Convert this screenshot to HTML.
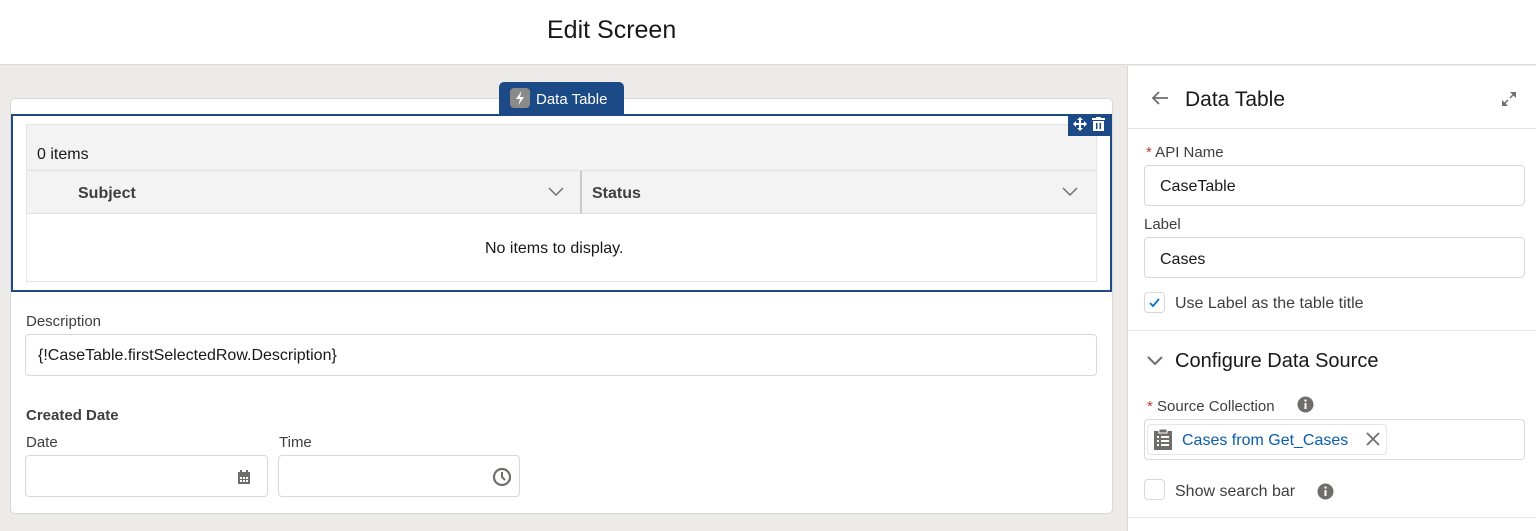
<!DOCTYPE html>
<html><head><style>
*{box-sizing:border-box;margin:0;padding:0}
body{width:1536px;height:531px;overflow:hidden;background:#ecebea;font-family:"Liberation Sans",sans-serif;color:#181818;position:relative}
.abs{position:absolute}
.t{position:absolute;padding-top:2px}
.inp{position:absolute;background:#fff;border:1px solid #d8d8d8;border-radius:4px}
.lbl{position:absolute;font-size:15px;color:#3e3e3c;padding-top:1px}
</style></head><body>
<div class="abs" style="left:0;top:0;width:1536px;height:65px;background:#fff;border-bottom:1px solid #dcdcdc"></div>
<div class="t" style="left:547px;top:14px;font-size:25px;color:#181818">Edit Screen</div>

<div class="abs" style="left:10px;top:98px;width:1103px;height:416px;background:#fff;border:1px solid #d8d8d8;border-radius:5px"></div>
<div class="abs" style="left:499px;top:82px;width:125px;height:33px;background:#1b4a86;border-radius:5px 5px 0 0"></div>
<svg class="abs" style="left:510px;top:88px" width="20" height="20"><rect width="20" height="20" rx="4" fill="#8a8a8a"/><path d="M11.5 3L6 11h4l-1.5 6L14 9h-4z" fill="#fff"/></svg>
<div class="t" style="left:536px;top:89px;font-size:15px;color:#fff">Data Table</div>
<div class="abs" style="left:11px;top:114px;width:1101px;height:178px;border:2px solid #1b4a86"></div>
<div class="abs" style="left:26px;top:124px;width:1071px;height:158px;border:1px solid #e5e5e5;background:#fff"></div>
<div class="abs" style="left:27px;top:125px;width:1069px;height:89px;background:#f3f3f3;border-bottom:1px solid #e0e0e0"></div>
<div class="abs" style="left:27px;top:170px;width:1069px;height:1px;background:#e0e0e0"></div>
<div class="t" style="left:37px;top:144px;font-size:16px">0 items</div>
<div class="t" style="left:78px;top:183px;font-size:16px;font-weight:bold;color:#3e3e3c">Subject</div>
<div class="t" style="left:592px;top:183px;font-size:16px;font-weight:bold;color:#3e3e3c">Status</div>
<div class="abs" style="left:580px;top:171px;width:2px;height:42px;background:#c9c9c9"></div>
<svg class="abs" style="left:548px;top:187px" width="16" height="10"><path d="M1 1l7 7 7-7" fill="none" stroke="#706e6b" stroke-width="1.5"/></svg>
<svg class="abs" style="left:1062px;top:187px" width="16" height="10"><path d="M1 1l7 7 7-7" fill="none" stroke="#706e6b" stroke-width="1.5"/></svg>
<div class="t" style="left:485px;top:238px;font-size:16px">No items to display.</div>
<div class="abs" style="left:1068px;top:114px;width:43px;height:22px;background:#1b4a86"></div>
<svg class="abs" style="left:1073px;top:117px" width="34" height="15"><g fill="#fff"><path d="M7 0l3 3H8v3h3V4l3 3-3 3V8H8v3h2l-3 3-3-3h2V8H3v2L0 7l3-3v2h3V3H4z"/><rect x="19" y="1" width="13" height="2"/><rect x="23" y="0" width="5" height="2"/><path d="M20 4h11v10H20z"/></g><g fill="#1b4a86"><rect x="23" y="6" width="1.5" height="6"/><rect x="26.5" y="6" width="1.5" height="6"/></g></svg>

<div class="lbl" style="left:26px;top:312px">Description</div>
<div class="inp" style="left:25px;top:334px;width:1072px;height:42px"></div>
<div class="t" style="left:38px;top:345px;font-size:16px">{!CaseTable.firstSelectedRow.Description}</div>
<div class="t" style="left:26px;top:405px;font-size:15px;font-weight:bold;color:#3e3e3c">Created Date</div>
<div class="lbl" style="left:26px;top:433px">Date</div>
<div class="lbl" style="left:279px;top:433px">Time</div>
<div class="inp" style="left:25px;top:455px;width:243px;height:42px"></div>
<div class="inp" style="left:278px;top:455px;width:242px;height:42px"></div>
<svg class="abs" style="left:236px;top:469px" width="16" height="16"><path d="M2 3h12v12H2z" fill="#706e6b"/><rect x="4" y="1" width="2" height="3" fill="#706e6b"/><rect x="10" y="1" width="2" height="3" fill="#706e6b"/><g fill="#fff"><rect x="4" y="8" width="2" height="2"/><rect x="7" y="8" width="2" height="2"/><rect x="10" y="8" width="2" height="2"/><rect x="4" y="11" width="2" height="2"/><rect x="7" y="11" width="2" height="2"/><rect x="10" y="11" width="2" height="2"/></g></svg>
<svg class="abs" style="left:492px;top:467px" width="20" height="20"><circle cx="10" cy="10" r="8" fill="none" stroke="#706e6b" stroke-width="2.2"/><path d="M10 5v5l3 3" fill="none" stroke="#706e6b" stroke-width="2"/></svg>

<div class="abs" style="left:1127px;top:66px;width:409px;height:465px;background:#fff;border-left:1px solid #d8d8d8"></div>
<div class="abs" style="left:1128px;top:128px;width:408px;height:1px;background:#e5e5e5"></div>
<svg class="abs" style="left:1150px;top:90px" width="20" height="16"><path d="M18 8H3M9 2L3 8l6 6" fill="none" stroke="#706e6b" stroke-width="1.8"/></svg>
<div class="t" style="left:1185px;top:86px;font-size:21px">Data Table</div>
<svg class="abs" style="left:1499px;top:90px" width="20" height="18"><path d="M11 2h6v6zM9 16H3v-6z" fill="#706e6b"/><path d="M15 4l-4 4M5 14l4-4" stroke="#706e6b" stroke-width="1.5"/></svg>
<div class="lbl" style="left:1146px;top:143px"><span style="color:#c23934">*</span> API Name</div>
<div class="inp" style="left:1144px;top:165px;width:381px;height:41px"></div>
<div class="t" style="left:1160px;top:176px;font-size:16px">CaseTable</div>
<div class="lbl" style="left:1144px;top:215px">Label</div>
<div class="inp" style="left:1144px;top:237px;width:381px;height:41px"></div>
<div class="t" style="left:1160px;top:249px;font-size:16px">Cases</div>
<div class="inp" style="left:1144px;top:292px;width:21px;height:21px"></div>
<svg class="abs" style="left:1148px;top:297px" width="13" height="11"><path d="M2 6l3 3 6-7" fill="none" stroke="#0176d3" stroke-width="1.8"/></svg>
<div class="t" style="left:1175px;top:293px;font-size:16px;color:#3e3e3c">Use Label as the table title</div>
<div class="abs" style="left:1128px;top:330px;width:408px;height:1px;background:#e5e5e5"></div>
<svg class="abs" style="left:1146px;top:355px" width="18" height="12"><path d="M2 2l7 7 7-7" fill="none" stroke="#706e6b" stroke-width="2"/></svg>
<div class="t" style="left:1175px;top:348px;font-size:20px">Configure Data Source</div>
<div class="lbl" style="left:1147px;top:397px"><span style="color:#c23934">*</span> Source Collection</div>
<svg class="abs" style="left:1297px;top:396px" width="17" height="17"><circle cx="8.5" cy="8.5" r="8" fill="#706e6b"/><rect x="7.5" y="7" width="2" height="6" fill="#fff"/><circle cx="8.5" cy="4.6" r="1.2" fill="#fff"/></svg>
<div class="inp" style="left:1144px;top:419px;width:381px;height:41px"></div>
<div class="abs" style="left:1147px;top:424px;width:240px;height:31px;border:1px solid #e5e5e5;border-radius:4px"></div>
<svg class="abs" style="left:1152px;top:428px" width="22" height="23"><path d="M2 3h18v19H2z" fill="#706e6b"/><rect x="7" y="1" width="8" height="4" fill="#706e6b" stroke="#fff" stroke-width="1"/><g fill="#fff"><rect x="5" y="8" width="2" height="2"/><rect x="9" y="8" width="8" height="2"/><rect x="5" y="12" width="2" height="2"/><rect x="9" y="12" width="8" height="2"/><rect x="5" y="16" width="2" height="2"/><rect x="9" y="16" width="8" height="2"/></g></svg>
<div class="t" style="left:1182px;top:430px;font-size:16px;color:#0b5cab">Cases from Get_Cases</div>
<svg class="abs" style="left:1366px;top:432px" width="14" height="14"><path d="M1 1l12 12M13 1L1 13" stroke="#706e6b" stroke-width="1.8"/></svg>
<div class="inp" style="left:1144px;top:479px;width:21px;height:21px"></div>
<div class="t" style="left:1175px;top:481px;font-size:16px;color:#3e3e3c">Show search bar</div>
<svg class="abs" style="left:1317px;top:483px" width="17" height="17"><circle cx="8.5" cy="8.5" r="8" fill="#706e6b"/><rect x="7.5" y="7" width="2" height="6" fill="#fff"/><circle cx="8.5" cy="4.6" r="1.2" fill="#fff"/></svg>
<div class="abs" style="left:1128px;top:517px;width:408px;height:1px;background:#e5e5e5"></div>
</body></html>
